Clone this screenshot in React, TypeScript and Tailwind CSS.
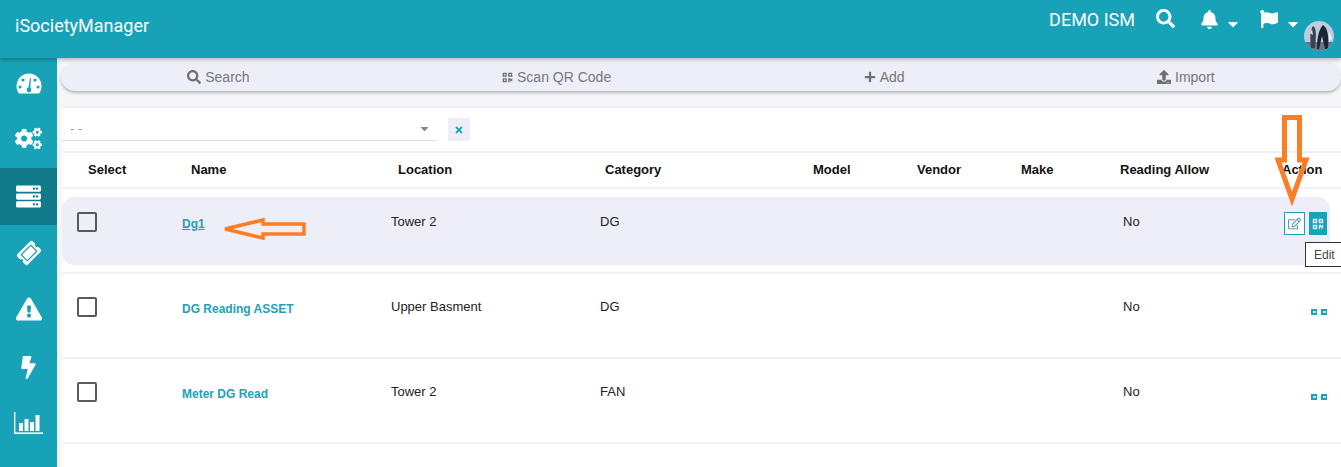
import React from "react";
import {
  FaCogs, FaServer, FaTicketAlt, FaExclamationTriangle, FaBolt,
  FaSearch, FaBell, FaFlag, FaPlus, FaUpload, FaRegEdit, FaQrcode, FaTimes, FaCaretDown,
} from "react-icons/fa";

const rows = [
  { name: "Dg1", location: "Tower 2", category: "DG", reading: "No", active: true },
  { name: "DG Reading ASSET", location: "Upper Basment", category: "DG", reading: "No", active: false },
  { name: "Meter DG Read", location: "Tower 2", category: "FAN", reading: "No", active: false },
];

function Gauge() {
  return (
    <svg width="26" height="21" viewBox="0 0 26 21">
      <path d="M3 20.5 C1.5 18.5 .5 16 .5 13.5 C.5 6 6 .5 13 .5 C20 .5 25.5 6 25.5 13.5 C25.5 16 24.5 18.5 23 20.5 Z" fill="#fff" />
      <g fill="#18a2b8">
        <circle cx="4" cy="14" r="1.6" />
        <circle cx="7" cy="7" r="1.6" />
        <circle cx="19" cy="7" r="1.6" />
        <circle cx="22" cy="14" r="1.6" />
        <circle cx="13" cy="17" r="2.4" />
        <path d="M12.2 16 L14 5 L15 5.3 L14.2 16.5 Z" />
      </g>
    </svg>
  );
}

function Bars() {
  return (
    <svg width="29" height="22" viewBox="0 0 29 22" fill="#fff">
      <rect x="0" y="0" width="1.4" height="22" />
      <rect x="0" y="20.4" width="29" height="1.6" />
      <rect x="5" y="11" width="4" height="8" />
      <rect x="10.5" y="7" width="4" height="12" />
      <rect x="16" y="10" width="4" height="9" />
      <rect x="21.5" y="3" width="4" height="16" />
    </svg>
  );
}

const sideItems: { icon: React.ReactNode; h: string; active?: boolean }[] = [
  { icon: <Gauge />, h: "h-[50px]" },
  { icon: <FaCogs size={27} />, h: "h-[60px]" },
  { icon: <FaServer size={25} />, h: "h-[57px]", active: true },
  { icon: <FaTicketAlt size={22} className="-rotate-45" />, h: "h-[56px]" },
  { icon: <FaExclamationTriangle size={26} />, h: "h-[56px]" },
  { icon: <FaBolt size={23} />, h: "h-[60px]" },
  { icon: <Bars />, h: "h-[52px]" },
];

function Avatar() {
  return (
    <svg width="30" height="30" viewBox="0 0 30 30" className="rounded-full">
      <rect width="30" height="30" fill="#bccbe0" />
      <rect y="21" width="30" height="9" fill="#66758a" />
      <path d="M9 5 C13 7 12 16 11 27 L7 27 C6 16 6 9 9 5Z" fill="#39424f" />
      <path d="M19 4 C24 7 25 16 24 28 L21 28 L18 15 L15 28 L13 28 C13 16 15 8 19 4Z" fill="#1d2530" />
      <path d="M6 12 L8 8 L9 14 Z" fill="#e9e2c8" />
      <path d="M25 10 L28 18 L25 20 Z" fill="#eef2f6" />
    </svg>
  );
}

function Toolbar() {
  const items = [
    { Icon: FaSearch, label: "Search", size: 14 },
    { Icon: FaQrcode, label: "Scan QR Code", size: 11 },
    { Icon: FaPlus, label: "Add", size: 12 },
    { Icon: FaUpload, label: "Import", size: 14 },
  ];
  return (
    <div className="ml-[4px] mt-[5px] h-[28px] flex justify-around rounded-[14px] bg-[#eeeef9] shadow-[0_2px_3px_rgba(0,0,0,0.25)]">
      {items.map(({ Icon, label, size }) => (
        <div key={label} className="flex items-center gap-[4px] text-[14px] text-[#777777]">
          <Icon size={size} className="text-[#6f6f6f]" />
          <span>{label}</span>
        </div>
      ))}
    </div>
  );
}

function ActionButtons({ active }: { active: boolean }) {
  if (active) {
    return (
      <div className="flex gap-[4px] items-center">
        <div className="w-[21px] h-[23px] border border-[#17a2b8] bg-white flex items-center justify-center">
          <FaRegEdit size={13} className="text-[#5b9fb5]" />
        </div>
        <div className="w-[18px] h-[23px] bg-[#17a2b8] flex items-center justify-center">
          <FaQrcode size={12} className="text-[#d3eff4]" />
        </div>
      </div>
    );
  }
  return (
    <div className="flex gap-[4px] ml-[27px]">
      <div className="w-[6px] h-[6px] bg-[#17a2b8] flex items-center justify-center"><div className="w-[3px] h-[2px] bg-[#bfe6ee]" /></div>
      <div className="w-[6px] h-[6px] bg-[#17a2b8] flex items-center justify-center"><div className="w-[3px] h-[2px] bg-[#bfe6ee]" /></div>
    </div>
  );
}

function Row({ r }: { r: (typeof rows)[number] }) {
  return (
    <div className={r.active ? "h-[68px] mt-[8px] mb-[7px] rounded-[12px] bg-[#eeeef9] mr-[11px] pt-[15px]" : "h-[85px] border-t-2 border-[#f0f0fa] pt-[23px]"}>
      <div className="grid grid-cols-[120px_209px_209px_523px_161px_1fr] text-[13px] leading-[15px] text-[#222222] items-start">
        <div className="pl-[15px]">
          <div className="w-[20px] h-[20px] rounded-[2px] border-2 border-[#595959]" />
        </div>
        <div className={`pt-[5px] font-bold text-[12px] text-[#23a0b8] ${r.active ? "underline" : ""}`}>{r.name}</div>
        <div className="pt-[2px]">{r.location}</div>
        <div className="pt-[2px]">{r.category}</div>
        <div className="pt-[2px]">{r.reading}</div>
        <div className={r.active ? "" : "pt-[12px]"}>
          <ActionButtons active={r.active} />
        </div>
      </div>
    </div>
  );
}

export default function App() {
  return (
    <div className="relative w-[1341px] h-[467px] overflow-hidden flex flex-col bg-white font-['Liberation_Sans',Arial,sans-serif]">
      <header className="relative z-10 h-[58px] shrink-0 bg-[#18a2b8] shadow-[0_2px_4px_rgba(0,0,0,0.25)] flex text-white font-['Roboto',sans-serif]">
        <div className="pl-[15px] pt-[15px] text-[18px] leading-[21px] flex-1">iSocietyManager</div>
        <div className="flex items-start">
          <div className="mt-[9px] text-[18px] leading-[21px]">DEMO ISM</div>
          <FaSearch size={19} className="ml-[21px] mt-[9px]" />
          <FaBell size={19} className="ml-[25px] mt-[10px]" />
          <FaCaretDown size={16} className="ml-[6px] mt-[16px]" />
          <FaFlag size={18} className="ml-[19px] mt-[10px]" />
          <FaCaretDown size={16} className="ml-[7px] mt-[16px]" />
          <div className="ml-[3px] mt-[21px] mr-[7px]"><Avatar /></div>
        </div>
      </header>

      <div className="flex flex-1 min-h-0">
        <aside className="w-[57px] shrink-0 bg-[#18a2b8] flex flex-col text-white">
          {sideItems.map(({ icon, h, active }, i) => (
            <div key={i} className={`${h} flex items-center justify-center ${active ? "bg-[#127a8a]" : ""}`}>
              {icon}
            </div>
          ))}
        </aside>

        <main className="flex-1 min-w-0 bg-[#f5f6f8]">
          <Toolbar />
          <div className="mt-[15px] ml-[5px] bg-white h-[361px] border-t-2 border-[#f0f0fa]">
            <div className="h-[43px] pt-[9px] flex items-start">
              <div className="w-[375px] h-[24px] border-b border-[#dddddd] flex items-center justify-between pl-[8px] pr-[6px] text-[13px] text-[#999999]">
                <span>- -</span>
                <FaCaretDown size={13} className="text-[#8a8a8a]" />
              </div>
              <div className="ml-[11px] mt-[1px] w-[22px] h-[23px] bg-[#eeeef9] flex items-center justify-center">
                <FaTimes size={10} className="text-[#17a2b8]" />
              </div>
            </div>
            <div className="h-[38px] border-y-2 border-[#f0f0fa] grid grid-cols-[129px_207px_207px_208px_104px_104px_99px_162px_1fr] items-center text-[13px] font-bold text-[#111111]">
              <div className="pl-[26px]">Select</div>
              <div>Name</div>
              <div>Location</div>
              <div>Category</div>
              <div>Model</div>
              <div>Vendor</div>
              <div>Make</div>
              <div>Reading Allow</div>
              <div>Action</div>
            </div>
            {rows.map((r) => (
              <Row key={r.name} r={r} />
            ))}
            <div className="border-t-2 border-[#f0f0fa]" />
          </div>
        </main>
      </div>

      <div className="absolute left-[1305px] top-[242px] w-[40px] h-[25px] bg-white border border-[#333333] text-[12px] text-[#444444] flex items-center pl-[8px]">Edit</div>

      <svg className="absolute left-0 top-0 pointer-events-none" width="1341" height="467" fill="none">
        <path d="M304 224 L263 224 L263 220 L225 229 L263 238 L263 234 L304 234 Z" stroke="#fb7d25" strokeWidth="3.5" />
        <path d="M1284.5 117.5 L1299.5 117.5 L1299.5 160 L1306 160 L1292 199 L1278 160 L1284.5 160 Z" stroke="#fb7d25" strokeWidth="5" />
      </svg>
    </div>
  );
}
